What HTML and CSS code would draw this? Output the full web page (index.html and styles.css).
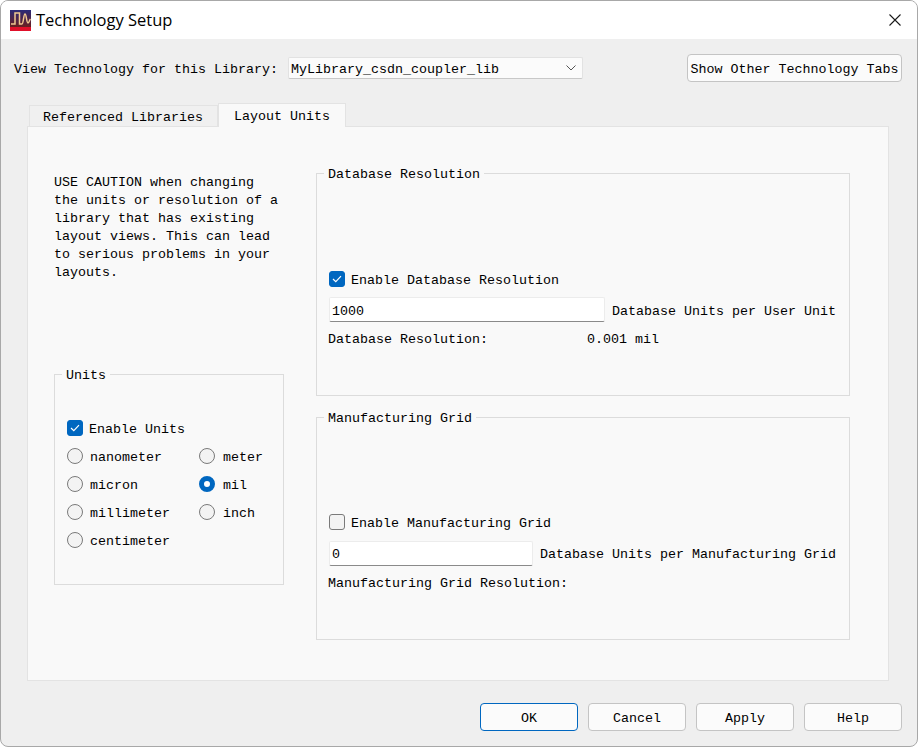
FILE: index.html
```html
<!DOCTYPE html>
<html lang="en">
<head>
<meta charset="utf-8">
<title>Technology Setup</title>
<link rel="stylesheet" href="styles.css">
</head>
<body>
<div class="window">
  <header class="titlebar">
    <svg class="app-icon" width="21" height="21" viewBox="0 0 21 21">
      <defs>
        <linearGradient id="iconbg" x1="0" y1="0" x2="0" y2="1">
          <stop offset="0" stop-color="#2a2a78"/>
          <stop offset="1" stop-color="#6a2020"/>
        </linearGradient>
      </defs>
      <rect width="21" height="17" fill="url(#iconbg)"/>
      <rect y="17" width="21" height="4" fill="#e0102a"/>
      <path d="M1 14H5V3H9.5V14H12M12 14C13.5 14 13.5 4 15 4C16.5 4 16.5 13 18 13C19 13 19.5 10 20.5 9" fill="none" stroke="#f0c890" stroke-width="1.5"/>
    </svg>
    <span class="title">Technology Setup</span>
    <svg class="close" width="14" height="14" viewBox="0 0 14 14"><path d="M1.5 1.5L12.5 12.5M12.5 1.5L1.5 12.5" stroke="#1a1a1a" stroke-width="1.1" fill="none"/></svg>
  </header>
  <main class="body">
    <div class="toprow">
      <label class="toplabel">View Technology for this Library:</label>
      <div class="combo">
        <span>MyLibrary_csdn_coupler_lib</span>
        <svg width="12" height="8" viewBox="0 0 12 8"><path d="M1.5 1.5L6 6L10.5 1.5" fill="none" stroke="#555" stroke-width="1"/></svg>
      </div>
      <button class="btn showtabs">Show Other Technology Tabs</button>
    </div>
    <nav class="tabs">
      <div class="tab">Referenced Libraries</div>
      <div class="tab active">Layout Units</div>
    </nav>
    <section class="panel">
      <div class="leftcol">
        <p class="caution">USE CAUTION when changing<br>the units or resolution of a<br>library that has existing<br>layout views. This can lead<br>to serious problems in your<br>layouts.</p>
        <fieldset class="group units">
          <legend>Units</legend>
          <div class="check-row"><span class="box on"><svg width="10" height="8" viewBox="0 0 10 8"><path d="M1 4L3.8 6.6L9 1.2" fill="none" stroke="#fff" stroke-width="1.2"/></svg></span>Enable Units</div>
          <div class="radios">
            <div class="radio-row"><span class="radio"></span>nanometer</div>
            <div class="radio-row"><span class="radio"></span>meter</div>
            <div class="radio-row"><span class="radio"></span>micron</div>
            <div class="radio-row"><span class="radio on"></span>mil</div>
            <div class="radio-row"><span class="radio"></span>millimeter</div>
            <div class="radio-row"><span class="radio"></span>inch</div>
            <div class="radio-row"><span class="radio"></span>centimeter</div>
          </div>
        </fieldset>
      </div>
      <div class="rightcol">
        <fieldset class="group db">
          <legend>Database Resolution</legend>
          <div class="check-row"><span class="box on"><svg width="10" height="8" viewBox="0 0 10 8"><path d="M1 4L3.8 6.6L9 1.2" fill="none" stroke="#fff" stroke-width="1.2"/></svg></span>Enable Database Resolution</div>
          <div class="input-row"><input class="field wide" type="text" value="1000"><span>Database Units per User Unit</span></div>
          <div class="info-row"><span class="info-label">Database Resolution:</span><span>0.001 mil</span></div>
        </fieldset>
        <fieldset class="group mfg">
          <legend>Manufacturing Grid</legend>
          <div class="check-row"><span class="box"></span>Enable Manufacturing Grid</div>
          <div class="input-row"><input class="field narrow" type="text" value="0"><span>Database Units per Manufacturing Grid</span></div>
          <div class="info-row"><span>Manufacturing Grid Resolution:</span></div>
        </fieldset>
      </div>
    </section>
    <footer class="actions">
      <button class="btn action default">OK</button>
      <button class="btn action">Cancel</button>
      <button class="btn action">Apply</button>
      <button class="btn action">Help</button>
    </footer>
  </main>
</div>
</body>
</html>
```
FILE: styles.css
```css
* { box-sizing: border-box; }
html, body { margin: 0; height: 100%; background: #fff; }
body { overflow: hidden; }
.window {
  width: 918px; height: 747px;
  border: 1px solid #a8a8a8; border-radius: 8px; overflow: hidden;
  display: flex; flex-direction: column;
  background: #efefef; color: #000;
  font: 13.33px/18px "Liberation Mono", monospace;
}
.titlebar {
  height: 38px; flex: none; background: #fff;
  display: flex; align-items: center; padding: 0 15px 0 9px;
}
.app-icon { flex: none; }
.title { margin-left: 5px; font: 16.5px/20px "Open Sans", sans-serif; }
.close { margin-left: auto; }
.body { flex: 1; display: flex; flex-direction: column; padding: 15px 15px 15px 13px; min-height: 0; }
.toprow { display: flex; align-items: center; height: 28px; flex: none; }
.toplabel { width: 274px; flex: none; padding-top: 4px; }
.combo {
  width: 295px; height: 22px; background: #fbfbfb; border: 1px solid #e2e2e2; border-bottom-color: #c8c8c8;
  border-radius: 2px; display: flex; align-items: center; justify-content: space-between;
  padding: 4px 5px 0 2px;
}
.combo svg { margin-top: -4px; }
.btn {
  font: inherit; color: #000; background: #fbfbfb; border: 1px solid #c4c4c4; border-radius: 4px; padding: 4px 0 0;
}
.showtabs { margin-left: auto; width: 215px; height: 28px; }
.tabs { display: flex; align-items: flex-end; height: 23px; margin: 21px 0 0 15px; flex: none; position: relative; z-index: 1; }
.tab {
  height: 21px; width: 189px; background: #f0f0f0; border: 1px solid #e3e3e3; border-bottom: 0;
  padding-left: 13px; line-height: 24px;
}
.tab.active {
  height: 24px; width: 128px; background: #f9f9f9; padding-left: 15px; line-height: 26px; margin-bottom: -1px;
}
.panel {
  flex: 1; min-height: 0; background: #f9f9f9; border: 1px solid #e3e3e3;
  margin-left: 13px; width: 862px;
  padding: 37px 0 0 26px;
  display: grid; grid-template-columns: 230px 534px; column-gap: 32px; align-items: start;
}
.caution { margin: 10px 0 0; }
.group { margin: 0; padding: 0 12px; border: 1px solid #dcdcdc; min-width: 0; }
.group legend { padding: 0 4px; margin-left: -5px; height: 18px; line-height: 22px; }
.units { margin-top: 83px; height: 220px; }
.units .check-row { margin-top: 38px; }
.db { height: 232px; }
.db .check-row { margin-top: 90px; }
.db .input-row { margin-top: 7px; }
.db .field, .db .input-row span { padding-top: 4px; }
.db .info-row { margin-top: 9px; }
.mfg { height: 232px; margin-top: 12px; }
.mfg .check-row { margin-top: 89px; }
.mfg .input-row { margin-top: 8px; }
.mfg .field, .mfg .input-row span { padding-top: 2px; }
.mfg .info-row { margin-top: 9px; }
.check-row { display: flex; align-items: flex-start; height: 18px; gap: 6px; }
.box {
  width: 16px; height: 16px; border-radius: 3px; flex: none; border: 1px solid #7a7a7a; background: #f3f3f3;
  display: flex; align-items: center; justify-content: center; margin-top: -1px;
}
.box.on { background: #0067c0; border-color: #0067c0; }
.radios { display: grid; grid-template-columns: 132px 1fr; grid-auto-rows: 28px; margin-top: 5px; }
.radio-row { display: flex; align-items: center; gap: 7px; }
.radio-row:nth-child(even) { gap: 8px; }
.radio { width: 16px; height: 16px; border-radius: 50%; border: 1px solid #7a7a7a; background: #f3f3f3; flex: none; margin-bottom: 4px; }
.radio.on { background: #fff; border: 5px solid #0067c0; }
.input-row { display: flex; align-items: center; gap: 7px; height: 25px; }
.field {
  font: inherit; color: #000; height: 25px; background: #fff; border: 1px solid #ececec; border-bottom: 1px solid #8a8a8a;
  border-radius: 2px; padding: 0 2px; outline: none; flex: none;
}
.field.wide { width: 276px; }
.field.narrow { width: 204px; }
.info-row { display: flex; margin-left: -1px; height: 18px; }
.info-label { width: 259px; }
.actions { flex: none; display: flex; justify-content: flex-end; gap: 10px; margin-top: 22px; height: 28px; }
.action { width: 98px; height: 28px; }
.default { border-color: #0067c0; }
```
